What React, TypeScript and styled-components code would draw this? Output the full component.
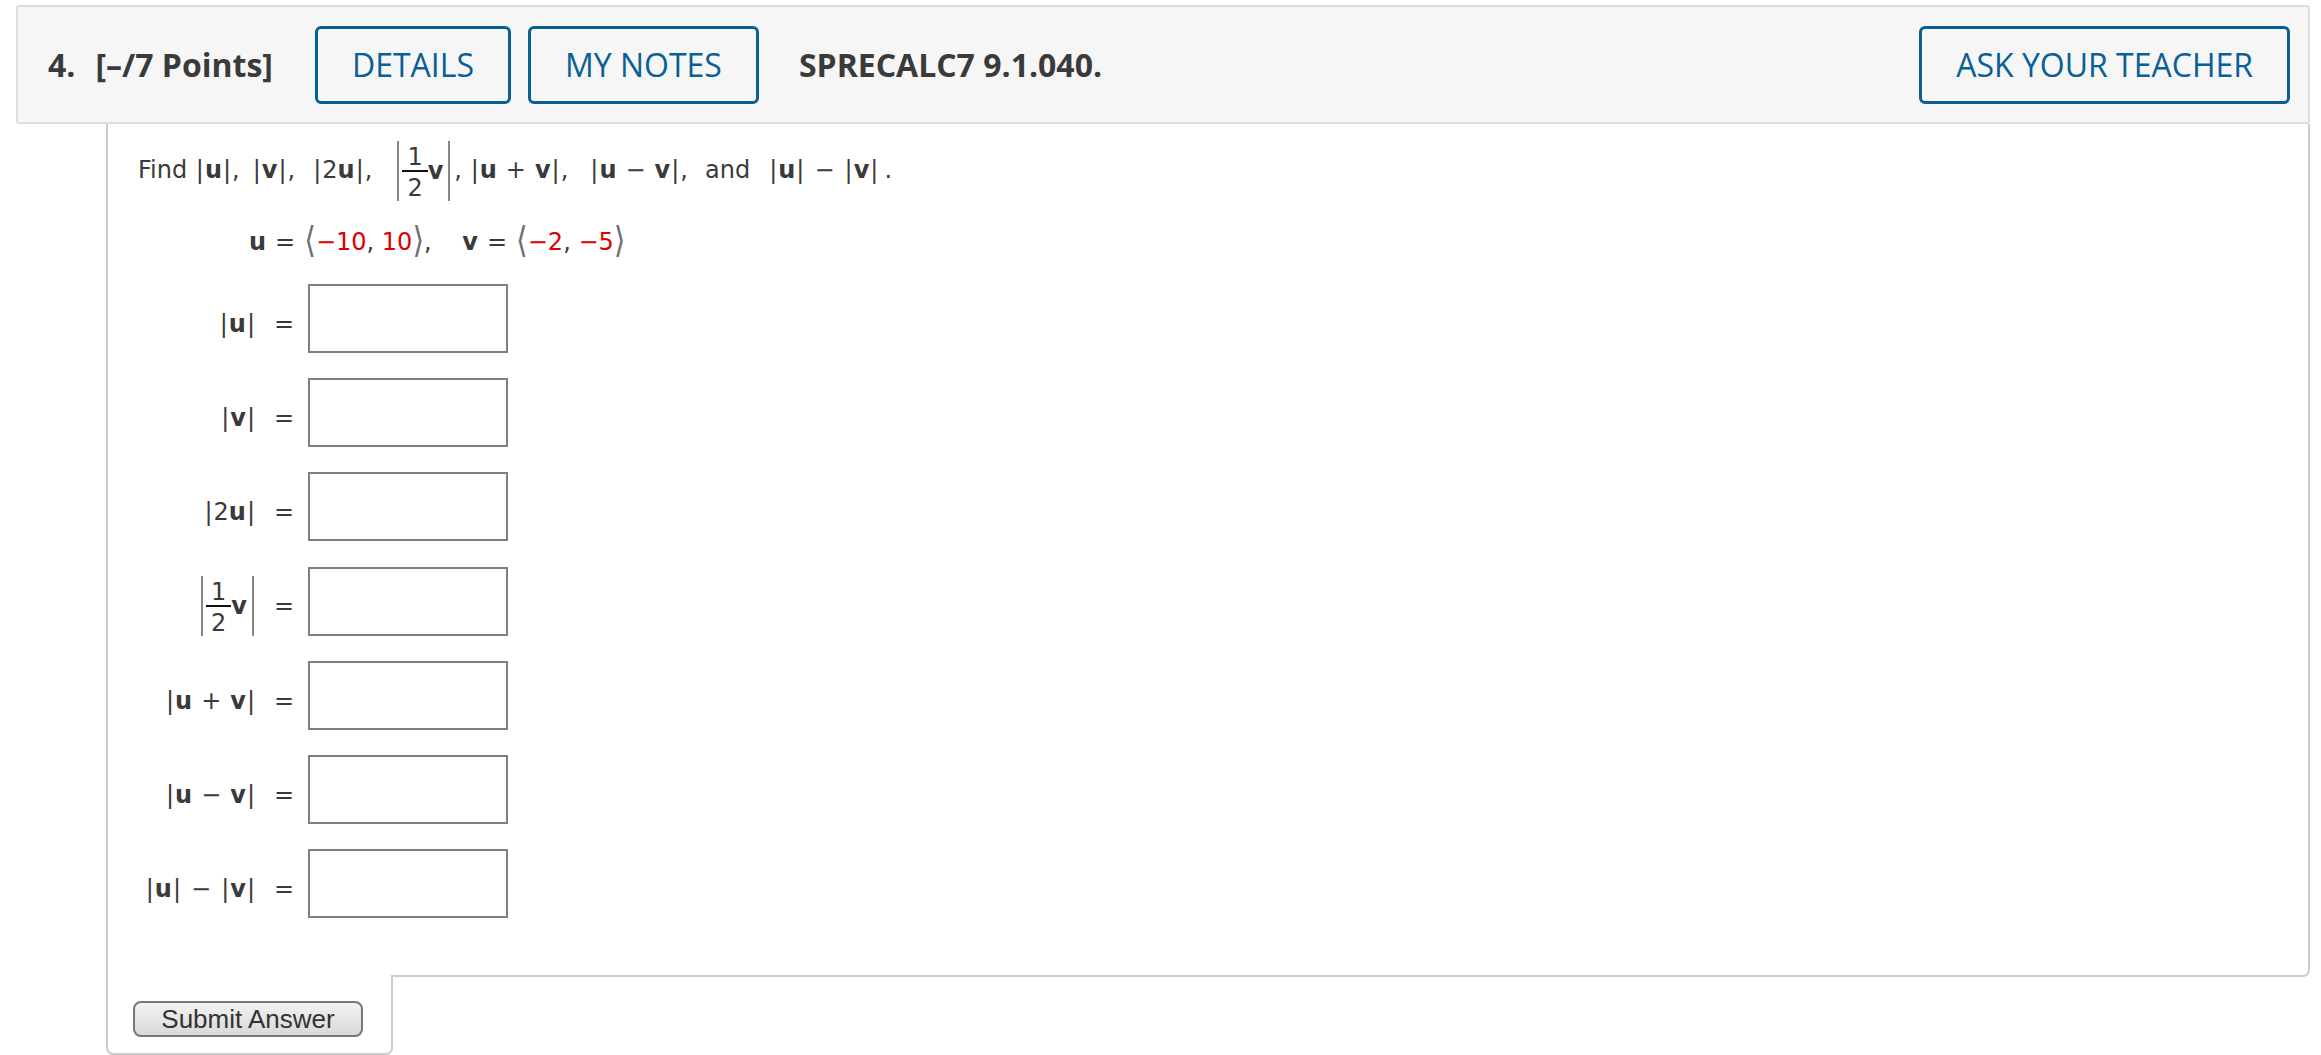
import React, {FunctionComponent} from "react";
import styled, {createGlobalStyle} from "styled-components";

const GlobalStyle = createGlobalStyle`
  html, body {
    margin: 0;
    padding: 0;
    background: #ffffff;
  }
`;

const Page = styled.div`
  padding: 5px 11px 0 16px;
`;

const Header = styled.div`
  display: flex;
  align-items: center;
  box-sizing: border-box;
  height: 119px;
  padding: 0 18px 0 30px;
  background: #f6f6f6;
  border: 2px solid #dedede;
  border-radius: 3px;
  font-family: "Open Sans", "Liberation Sans", sans-serif;
  color: #3a3a3a;
`;

const QNum = styled.span`
  font-size: 32px;
  font-weight: 700;
`;

const Points = styled.span`
  font-size: 32px;
  font-weight: 700;
  margin-left: 20px;
`;

const Code = styled.span`
  font-size: 32px;
  font-weight: 700;
  margin-left: 40px;
`;

const Spacer = styled.div`
  flex: 1;
`;

const HeadButton = styled.button<{ $gap?: number }>`
  box-sizing: border-box;
  height: 78px;
  margin-left: ${p => p.$gap ?? 0}px;
  padding: 0 34px;
  background: transparent;
  border: 3px solid #0a5f97;
  border-radius: 6px;
  color: #0a5f97;
  font-family: "Open Sans", "Liberation Sans", sans-serif;
  font-size: 32px;
  font-weight: 500;
  white-space: nowrap;
`;

const Panel = styled.div`
  margin-left: 90px;
`;

const Body = styled.div`
  padding: 17px 30px 57px 30px;
  border: 2px solid #cccccc;
  border-top: none;
  border-bottom-right-radius: 7px;
  font-family: "DejaVu Sans", Verdana, sans-serif;
  font-size: 24px;
  color: #3a3a3a;
`;

const Prompt = styled.div`
  line-height: 28px;
  white-space: nowrap;
`;

const Given = styled.div`
  margin: 25px 0 0 111px;
  line-height: 28px;
  white-space: nowrap;
`;

const B = styled.b`
  font-weight: 700;
`;

const Bar = styled.span`
  margin: 0 1px;
`;

const Sep = styled.span<{ $w?: number }>`
  margin-right: ${p => p.$w ?? 21}px;
`;

const Op = styled.span`
  margin: 0 9px;
`;

const Dot = styled.span`
  margin-left: 5px;
`;

const Red = styled.span`
  color: #dd0000;
`;

const Angle = styled.span`
  display: inline-block;
  color: #707070;
  font-size: 30px;
  transform: scaleY(1.2);
`;

const TallAbs = styled.span<{ $inline?: boolean }>`
  display: inline-flex;
  align-items: center;
  vertical-align: middle;
  box-sizing: border-box;
  height: 60px;
  margin: ${p => p.$inline ? "0 4px 0 0" : "0 2px 0 0"};
  padding: 0 5px 0 3px;
  border-left: 2px solid #858585;
  border-right: 2px solid #858585;
`;

const Frac = styled.span`
  display: inline-flex;
  flex-direction: column;
  align-items: center;
  line-height: 25px;
  margin-top: 4px;
`;

const Numer = styled.span`
  padding: 0 5px;
  border-bottom: 2px solid #111111;
`;

const Denom = styled.span`
  padding-top: 4px;
`;

const Answers = styled.div`
  display: flex;
  flex-direction: column;
  gap: 25px;
  margin-top: 28px;
`;

const Row = styled.div`
  display: flex;
  align-items: center;
`;

const Label = styled.div`
  width: 118px;
  padding-top: 10px;
  text-align: right;
  white-space: nowrap;
`;

const Eq = styled.span`
  padding-top: 10px;
  margin: 0 14px 0 18px;
`;

const Box = styled.input`
  box-sizing: border-box;
  width: 200px;
  height: 69px;
  margin: 0;
  border: 2px solid #808080;
  background: #ffffff;
`;

const SubmitTab = styled.div`
  position: relative;
  box-sizing: border-box;
  width: 287px;
  margin-top: -2px;
  padding: 26px 0 16px 25px;
  background: #ffffff;
  border: 2px solid #cccccc;
  border-top: none;
  border-bottom-left-radius: 7px;
  border-bottom-right-radius: 7px;
`;

const SubmitButton = styled.button`
  box-sizing: border-box;
  width: 230px;
  height: 36px;
  padding: 0;
  border: 2px solid #777777;
  border-radius: 8px;
  background: linear-gradient(#f2f2f2, #d9d9d9);
  color: #333333;
  font-family: "Liberation Sans", Arial, sans-serif;
  font-size: 26px;
  line-height: 30px;
`;

const Half: FunctionComponent<{ inline?: boolean }> = ({inline}) => (
    <TallAbs $inline={inline}>
        <Frac>
            <Numer>1</Numer>
            <Denom>2</Denom>
        </Frac>
        <B>v</B>
    </TallAbs>
);

const Abs: FunctionComponent<{ children: React.ReactNode }> = ({children}) => (
    <><Bar>|</Bar>{children}<Bar>|</Bar></>
);

const rows: { key: string; label: React.ReactNode }[] = [
    {key: "u", label: <Abs><B>u</B></Abs>},
    {key: "v", label: <Abs><B>v</B></Abs>},
    {key: "2u", label: <Abs>2<B>u</B></Abs>},
    {key: "half", label: <Half/>},
    {key: "sum", label: <Abs><B>u</B><Op>+</Op><B>v</B></Abs>},
    {key: "diff", label: <Abs><B>u</B><Op>−</Op><B>v</B></Abs>},
    {key: "normdiff", label: <><Abs><B>u</B></Abs><Op>−</Op><Abs><B>v</B></Abs></>},
];

const App: FunctionComponent = () => {
    return <Page>
        <GlobalStyle/>
        <Header>
            <QNum>4.</QNum>
            <Points>[–/7 Points]</Points>
            <HeadButton $gap={42}>DETAILS</HeadButton>
            <HeadButton $gap={17}>MY NOTES</HeadButton>
            <Code>SPRECALC7 9.1.040.</Code>
            <Spacer/>
            <HeadButton>ASK YOUR TEACHER</HeadButton>
        </Header>
        <Panel>
            <Body>
                <Prompt>
                    Find <Abs><B>u</B></Abs><Sep $w={12}>,</Sep><Abs><B>v</B></Abs><Sep $w={17}>,</Sep>
                    <Abs>2<B>u</B></Abs><Sep $w={25}>,</Sep>
                    <Half inline/>,&nbsp;<Abs><B>u</B><Op>+</Op><B>v</B></Abs><Sep>,</Sep>
                    <Abs><B>u</B><Op>−</Op><B>v</B></Abs><Sep $w={17}>,</Sep>
                    <Sep $w={18}>and</Sep><Abs><B>u</B></Abs><Op>−</Op><Abs><B>v</B></Abs><Dot>.</Dot>
                </Prompt>
                <Given>
                    <B>u</B><Op>=</Op><Angle>⟨</Angle><Red>−10</Red>, <Red>10</Red><Angle>⟩</Angle>,&nbsp;&nbsp;&nbsp;&nbsp;
                    <B>v</B><Op>=</Op><Angle>⟨</Angle><Red>−2</Red>, <Red>−5</Red><Angle>⟩</Angle>
                </Given>
                <Answers>
                    {rows.map(r => <Row key={r.key}>
                        <Label>{r.label}</Label>
                        <Eq>=</Eq>
                        <Box type="text"/>
                    </Row>)}
                </Answers>
            </Body>
            <SubmitTab>
                <SubmitButton>Submit Answer</SubmitButton>
            </SubmitTab>
        </Panel>
    </Page>;
}

export default App;
